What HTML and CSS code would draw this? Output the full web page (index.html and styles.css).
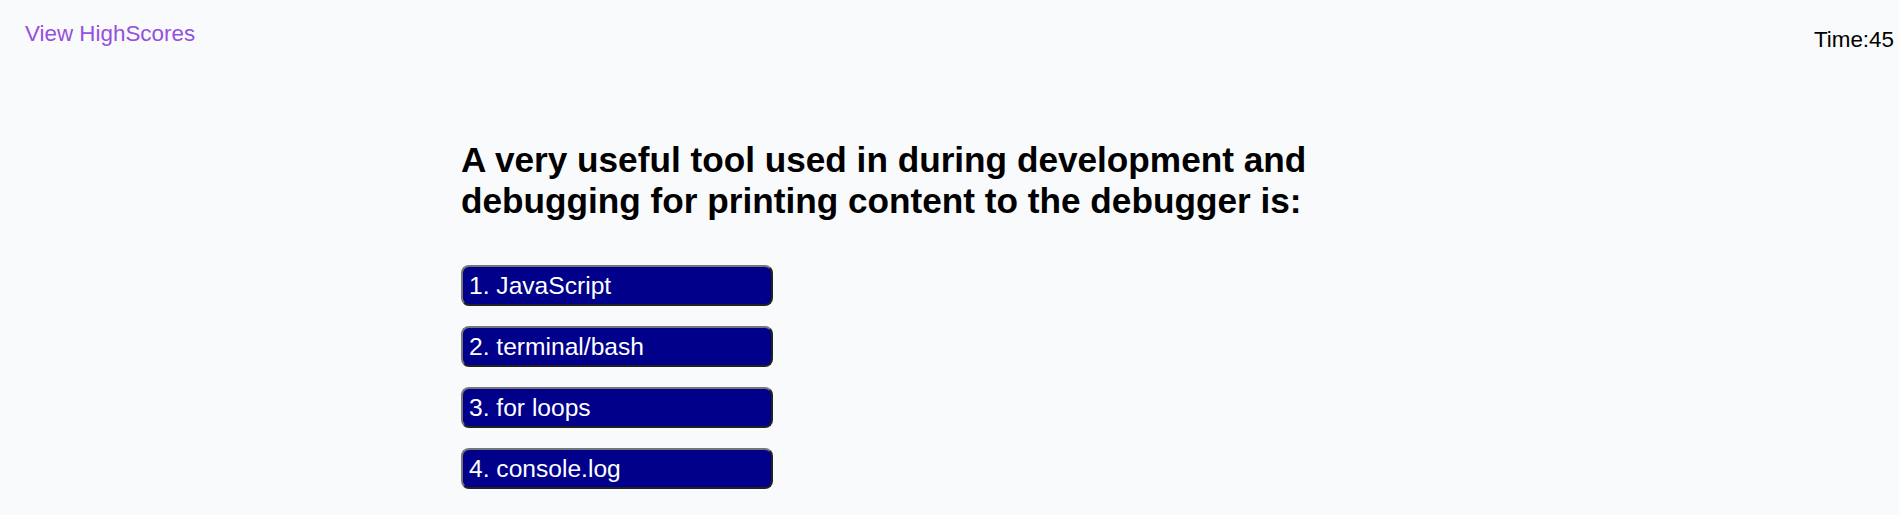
FILE: index.html
```html
<!DOCTYPE html>
<html lang="en">
<head>
<meta charset="utf-8">
<title>Code Quiz</title>
<link rel="stylesheet" href="styles.css">
</head>
<body>
<header class="topbar">
  <a class="highscores" href="#">View HighScores</a>
  <div class="timer">Time:45</div>
</header>
<main class="quiz">
  <h2 class="question">A very useful tool used in during development and debugging for printing content to the debugger is:</h2>
  <div class="choices">
    <button class="choice">1. JavaScript</button>
    <button class="choice">2. terminal/bash</button>
    <button class="choice">3. for loops</button>
    <button class="choice">4. console.log</button>
  </div>
</main>
</body>
</html>
```
FILE: styles.css
```css
html, body {
  margin: 0;
  padding: 0;
}
body {
  background: #f9fafc;
  font-family: "Liberation Sans", Arial, sans-serif;
  color: #000;
}
.topbar {
  display: flex;
  justify-content: space-between;
  align-items: flex-start;
}
.highscores {
  font-size: 22.4px;
  color: #9650dc;
  text-decoration: none;
  margin: 20.5px 0 0 25px;
}
.timer {
  font-size: 22.4px;
  margin: 26.5px 5px 0 0;
}
.quiz {
  width: 977px;
  margin: 87.5px auto 0;
}
.question {
  margin: 0;
  font-size: 35.2px;
  font-weight: bold;
  line-height: 40.5px;
}
.choices {
  display: flex;
  flex-direction: column;
  align-items: flex-start;
  gap: 20px;
  margin-top: 44px;
}
.choice {
  box-sizing: border-box;
  width: 312px;
  height: 41px;
  padding: 0 6px;
  text-align: left;
  font-family: "Liberation Sans", Arial, sans-serif;
  font-size: 24.6px;
  line-height: 28px;
  color: #fff;
  background: #00008b;
  border: 2px outset #767676;
  border-radius: 8px;
}
```
